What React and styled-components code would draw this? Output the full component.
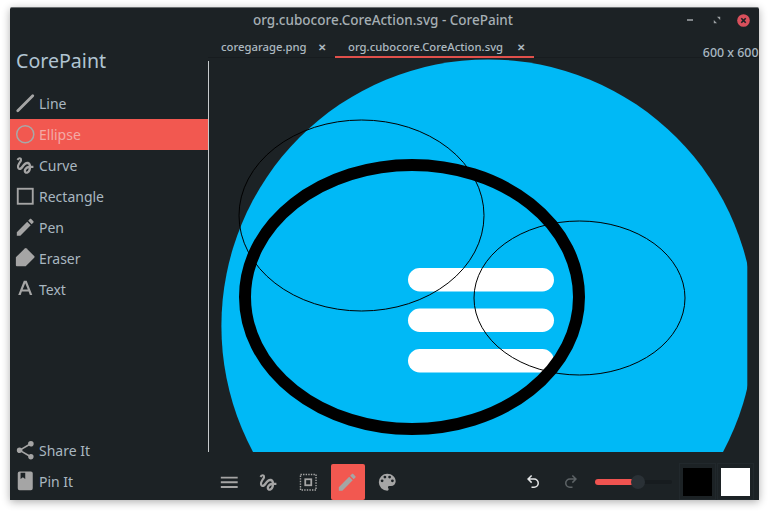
import React from 'react';
import styled, { createGlobalStyle } from 'styled-components';

const Global = createGlobalStyle`
  html, body { margin: 0; padding: 0; background: #fff; }
  body { width: 768px; height: 513px; overflow: hidden; font-family: "Noto Sans", sans-serif; }
`;
const Page = styled.div`
  width: 768px; height: 513px; padding: 6.5px 0 0 9.5px; box-sizing: border-box;
`;
const Window = styled.div`
  width: 749px; height: 493.5px; background: #1c2225; color: #a9b7c0;
  display: flex; flex-direction: column; border-radius: 2px 2px 0 0; position: relative;
  box-shadow: 0 2px 8px rgba(0,0,0,.32); overflow: hidden;
  border-top: 1px solid #6b6f71; box-sizing: border-box;
`;
const TitleBar = styled.div`
  height: 29.5px; flex: none; padding: 3px 2px 0 0; box-sizing: border-box;
`;
const Title = styled.div`
  text-align: center; font-size: 13.5px; line-height: 18px; font-weight: 500; color: #a6afb4;
`;
const WinButtons = styled.div`
  position: absolute; right: 9px; top: 6px; display: flex; align-items: center; gap: 15.5px;
`;
const Body = styled.div`
  flex: 1; display: flex; min-height: 0;
`;
const Sidebar = styled.aside`
  width: 198.5px; flex: none; display: flex; flex-direction: column; padding-bottom: 3px; box-sizing: border-box;
`;
const Brand = styled.div`
  font-size: 19.6px; color: #b0c4d2; padding: 10px 0 0 6.5px; height: 51px; box-sizing: border-box;
`;
const Item = styled.div`
  height: 31px; flex: none; display: flex; align-items: center; font-size: 14px; padding-left: 4.75px;
  color: ${p => p.$active ? '#f3aaa5' : '#a9b7c0'};
  background: ${p => p.$active ? '#f25850' : 'transparent'};
  svg { flex: none; margin-right: 2.25px; }
`;
const Spacer = styled.div`flex: 1;`;
const Main = styled.div`
  flex: 1; display: flex; flex-direction: column; min-width: 0;
`;
const TabRow = styled.div`
  height: 21px; flex: none; display: flex; position: relative; border-bottom: 1px solid #171c1f; box-sizing: border-box;
`;
const Tab = styled.div`
  height: 21px; flex: none; box-sizing: border-box; display: flex; align-items: center; justify-content: space-between;
  width: ${p => p.$w}px; padding: 0 ${p => p.$pr}px 0 ${p => p.$pl}px; font-size: 11.3px; font-weight: 500; color: #adb9c0;
  border-bottom: 2px solid ${p => p.$active ? '#e0504b' : 'transparent'};
  span + span { font-size: 10px; font-weight: 700; }
`;
const Size = styled.div`
  position: absolute; right: 0; top: 7px; font-size: 12.4px; color: #a9b8c2; font-weight: 500;
`;
const CanvasRow = styled.div`
  height: 394px; flex: none; display: flex;
`;
const Divider = styled.div`
  width: 1px; background: #c6cacc; margin-top: 3px; flex: none;
`;
const Canvas = styled.svg`
  display: block; flex: none; width: 549.5px; height: 394px;
`;
const Toolbar = styled.div`
  height: 48px; flex: none; display: flex; align-items: flex-end; padding: 0 5px 0 4px; box-sizing: border-box;
`;
const ToolBtn = styled.div`
  width: 34px; height: 36.5px; flex: none; display: flex; align-items: center; justify-content: center;
  margin-right: ${p => p.$mr ?? 5.5}px; margin-left: ${p => p.$auto ? 'auto' : '0'};
  border-radius: 2px; background: ${p => p.$active ? '#f25850' : 'transparent'};
`;
const Slider = styled.div`
  width: 77px; height: 4px; flex: none; border-radius: 2px; background: #171c1f; position: relative; margin: 0 7px 16px 0;
`;
const Fill = styled.div`
  position: absolute; left: 0; top: -1px; height: 6px; border-radius: 3px; background: #ef5350;
`;
const Knob = styled.div`
  position: absolute; left: 36px; top: -5px; width: 14px; height: 14px; border-radius: 50%; background: #2a3136;
`;
const SwatchBox = styled.div`
  width: 37px; height: 37px; flex: none; box-sizing: border-box; border: 1px solid #21282c; padding: 4px 3px 3px 3px;
  margin-left: ${p => p.$ml || 0}px;
`;
const Swatch = styled.div`
  width: 29px; height: 28px; background: ${p => p.$c};
`;

const I = ({ children, s = 22.5, c = '#a5a5a5' }) => (
  <svg width={s} height={s} viewBox="0 0 24 24" fill={c}>{children}</svg>
);
const GESTURE = 'M4.59,6.89C5.29,6.18 6,5.54 6.3,5.67C6.8,5.87 6.3,6.7 6,7.19C5.75,7.61 3.14,11.08 3.14,13.5C3.14,14.78 3.62,15.84 4.5,16.5C5.23,17.04 6.21,17.21 7.07,16.95C8.1,16.65 8.95,15.6 10.03,14.27C11.21,12.82 12.78,10.92 14,10.92C15.59,10.92 15.61,11.9 15.72,12.66C11.94,13.3 10.33,16.34 10.33,18.05C10.33,19.76 11.77,21.15 13.54,21.15C15.17,21.15 17.83,19.82 18.23,15.05H20.69V12.55H18.23C18.08,10.9 17.14,8.36 14.2,8.36C11.95,8.36 10.04,10.27 9.28,11.2C8.7,11.93 7.22,13.69 7,13.92C6.75,14.21 6.33,14.75 5.91,14.75C5.47,14.75 5.2,13.94 5.55,12.88C5.89,11.82 6.91,10.1 7.35,9.46C8.11,8.35 8.62,7.59 8.62,6.27C8.62,4.16 7.03,3.5 6.19,3.5C4.92,3.5 3.81,4.46 3.57,4.71C3.22,5.06 2.93,5.35 2.72,5.61L4.59,6.89M13.58,18.8C13.27,18.8 12.84,18.54 12.84,18.08C12.84,17.48 13.57,15.88 15.71,15.32C15.41,18 14.15,18.8 13.58,18.8Z';
const PENCIL = 'M20.71,7.04C21.1,6.65 21.1,6 20.71,5.63L18.37,3.29C18,2.9 17.35,2.9 16.96,3.29L15.12,5.12L18.87,8.87M3,17.25V21H6.75L17.81,9.93L14.06,6.18L3,17.25Z';
const PALETTE = 'M17.5,12A1.5,1.5 0 0,1 16,10.5A1.5,1.5 0 0,1 17.5,9A1.5,1.5 0 0,1 19,10.5A1.5,1.5 0 0,1 17.5,12M14.5,8A1.5,1.5 0 0,1 13,6.5A1.5,1.5 0 0,1 14.5,5A1.5,1.5 0 0,1 16,6.5A1.5,1.5 0 0,1 14.5,8M9.5,8A1.5,1.5 0 0,1 8,6.5A1.5,1.5 0 0,1 9.5,5A1.5,1.5 0 0,1 11,6.5A1.5,1.5 0 0,1 9.5,8M6.5,12A1.5,1.5 0 0,1 5,10.5A1.5,1.5 0 0,1 6.5,9A1.5,1.5 0 0,1 8,10.5A1.5,1.5 0 0,1 6.5,12M12,3A9,9 0 0,0 3,12A9,9 0 0,0 12,21A1.5,1.5 0 0,0 13.5,19.5C13.5,19.11 13.35,18.76 13.11,18.5C12.88,18.23 12.73,17.88 12.73,17.5A1.5,1.5 0 0,1 14.23,16H16A5,5 0 0,0 21,11C21,6.58 16.97,3 12,3Z';
const SHARE = 'M18,16.08C17.24,16.08 16.56,16.38 16.04,16.85L8.91,12.7C8.96,12.47 9,12.24 9,12C9,11.76 8.96,11.53 8.91,11.3L15.96,7.19C16.5,7.69 17.21,8 18,8A3,3 0 0,0 21,5A3,3 0 0,0 18,2A3,3 0 0,0 15,5C15,5.24 15.04,5.47 15.09,5.7L8.04,9.81C7.5,9.31 6.79,9 6,9A3,3 0 0,0 3,12A3,3 0 0,0 6,15C6.79,15 7.5,14.69 8.04,14.19L15.16,18.34C15.11,18.55 15.08,18.77 15.08,19C15.08,20.61 16.39,21.91 18,21.91C19.61,21.91 20.92,20.61 20.92,19A2.92,2.92 0 0,0 18,16.08Z';
const UNDO = 'M13.5,7A6.5,6.5 0 0,1 20,13.5A6.5,6.5 0 0,1 13.5,20H10V18H13.5C16,18 18,16 18,13.5C18,11 16,9 13.5,9H7.83L10.91,12.09L9.5,13.5L4,8L9.5,2.5L10.92,3.91L7.83,7H13.5Z';

const side = [
  ['Line', <I><path d="M4 20L20 4" fill="none" stroke="#a5a5a5" strokeWidth="3" strokeLinecap="round" /></I>],
  ['Ellipse', <I c="none"><circle cx="12" cy="12" r="9.100" stroke="#a8a8a8" strokeWidth="1.600" /></I>, true],
  ['Curve', <I><path d={GESTURE} /></I>],
  ['Rectangle', <I c="none"><rect x="4" y="4" width="16" height="16" stroke="#a5a5a5" strokeWidth="2" /></I>],
  ['Pen', <I><path d={PENCIL} /></I>],
  ['Eraser', <I><path d="M2 11L11.500 1.500q1-1 2 0L21.500 9.500q1 1 0 2L12.500 20.500H3q-1 0-1-1z" /></I>],
  ['Text', <I><path d="M10.500 3h3L19.500 18h-2.600l-1.300-3.600H8.400L7.100 18H4.500zM9.300 12.200h5.400L12 5.500z" fillRule="evenodd" /></I>],
];

export default function App() {
  return (
    <Page>
      <Global />
      <Window>
        <TitleBar>
          <Title>org.cubocore.CoreAction.svg - CorePaint</Title>
        </TitleBar>
        <WinButtons>
          <svg width="11" height="8" viewBox="0 0 11 8"><rect x="0" y="3.200" width="6" height="1.600" fill="#9a9fa2" /></svg>
          <svg width="8" height="8" viewBox="0 0 8 8"><path d="M4 .8h3.200V4zM4 7.200H.8V4z" fill="#9a9fa2" /></svg>
          <svg width="13" height="13" viewBox="0 0 14 14"><circle cx="7" cy="7" r="6.800" fill="#d9505c" /><path d="M4.600 4.600l4.800 4.800M9.400 4.600l-4.800 4.800" stroke="#1c2225" strokeWidth="1.800" /></svg>
        </WinButtons>
        <Body>
          <Sidebar>
            <Brand>CorePaint</Brand>
            {side.map(([t, ic, a]) => <Item key={t} $active={a}>{ic}{t}</Item>)}
            <Spacer />
            <Item><I><path d={SHARE} /></I>Share It</Item>
            <Item><I><path d="M6 1.500h12a2 2 0 012 2v16a2 2 0 01-2 2H6a2 2 0 01-2-2v-16a2 2 0 012-2zM7 3v6.500l2.500-1.700L12 9.500V3z" fillRule="evenodd" /></I>Pin It</Item>
          </Sidebar>
          <Main>
            <TabRow>
              <Tab $w={127} $pl={13} $pr={9}><span>coregarage.png</span><span>✕</span></Tab>
              <Tab $active $w={199} $pl={13} $pr={9}><span>org.cubocore.CoreAction.svg</span><span>✕</span></Tab>
              <Size>600 x 600</Size>
            </TabRow>
            <CanvasRow>
              <Divider />
              <Canvas viewBox="209 58 549.500 394">
                <clipPath id="img"><rect x="209" y="58" width="538.300" height="394" /></clipPath>
                <circle clipPath="url(#img)" cx="488" cy="326" r="266.600" fill="#00b9f6" />
                <rect x="408" y="268" width="146" height="23.500" rx="11.700" fill="#fff" />
                <rect x="408" y="308.500" width="146" height="23.500" rx="11.700" fill="#fff" />
                <rect x="408" y="349" width="146" height="23.500" rx="11.700" fill="#fff" />
                <ellipse cx="412" cy="297" rx="167" ry="132" fill="none" stroke="#000" strokeWidth="12" />
                <ellipse cx="361.500" cy="215.500" rx="122.500" ry="95.500" fill="none" stroke="#000" strokeWidth="1" />
                <ellipse cx="579.500" cy="298" rx="105.500" ry="77" fill="none" stroke="#000" strokeWidth="1" />
              </Canvas>
            </CanvasRow>
            <Toolbar>
              <ToolBtn><I><path d="M3,6H21V8H3V6M3,11H21V13H3V11M3,16H21V18H3V16Z" /></I></ToolBtn>
              <ToolBtn><I><path d={GESTURE} /></I></ToolBtn>
              <ToolBtn>
                <I c="none">
                  <rect x="8.800" y="8.800" width="6.400" height="6.400" stroke="#a5a5a5" strokeWidth="1.900" />
                  <rect x="3.700" y="3.700" width="16.600" height="16.600" stroke="#a5a5a5" strokeWidth="1.500" strokeDasharray="1.500 1.270" />
                </I>
              </ToolBtn>
              <ToolBtn $active><I><path d={PENCIL} /></I></ToolBtn>
              <ToolBtn><I><path d={PALETTE} /></I></ToolBtn>
              <ToolBtn $auto $mr={4.4}><I s={18} c="#e4e6e7"><path d={UNDO} /></I></ToolBtn>
              <ToolBtn $mr={6.3}><I s={18} c="#5d6366"><path transform="matrix(-1 0 0 1 24 0)" d={UNDO} /></I></ToolBtn>
              <Slider><Fill style={{ width: 43 }} /><Knob /></Slider>
              <SwatchBox><Swatch $c="#000" /></SwatchBox>
              <SwatchBox $ml={1}><Swatch $c="#fff" /></SwatchBox>
            </Toolbar>
          </Main>
        </Body>
      </Window>
    </Page>
  );
}
